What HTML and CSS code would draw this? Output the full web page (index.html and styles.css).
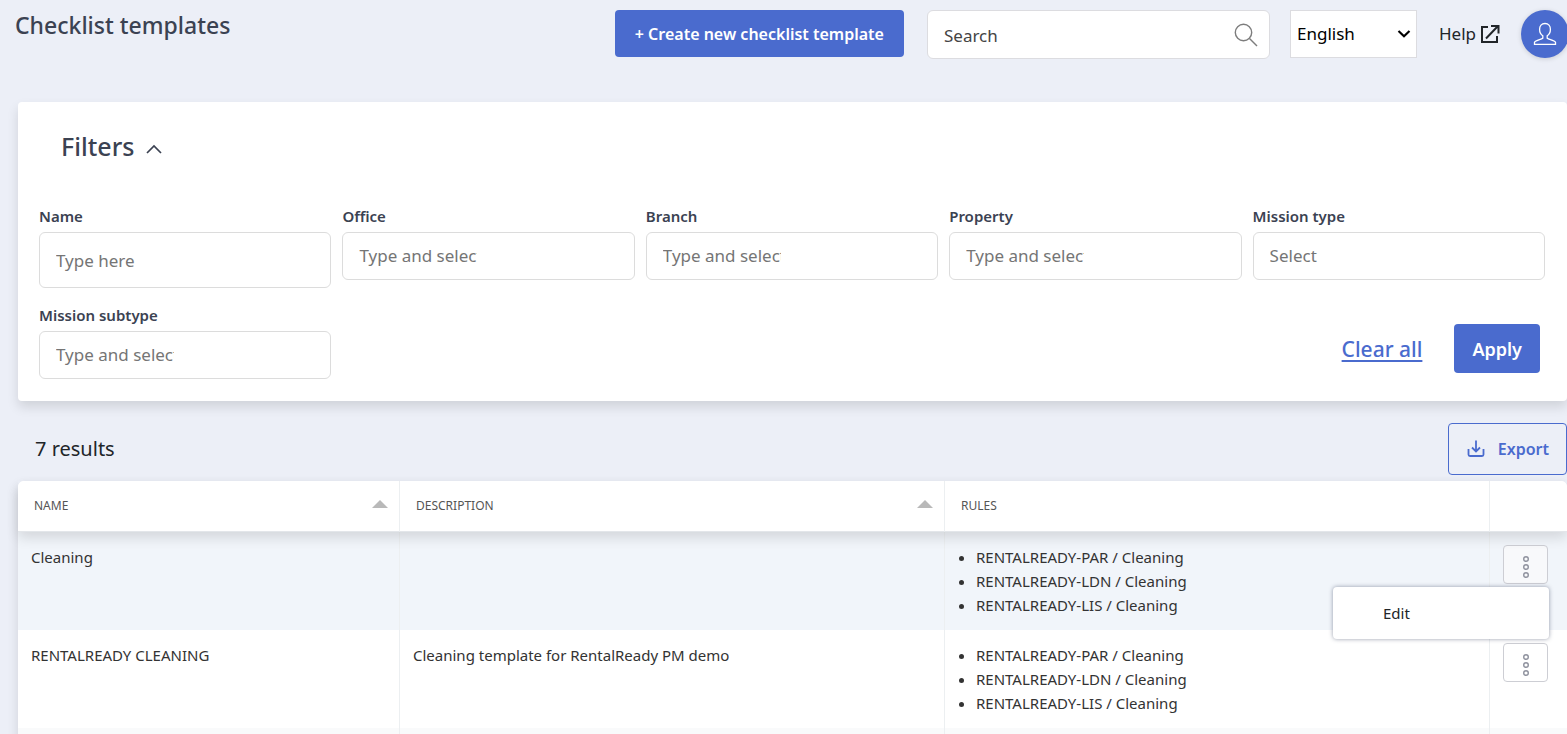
FILE: index.html
```html
<!DOCTYPE html>
<html lang="en">
<head>
    <meta charset="UTF-8">
    <meta name="viewport" content="width=device-width, initial-scale=1.0">
    <title>Checklist templates</title>
    <link rel="stylesheet" href="styles.css">
</head>
<body>
    <header class="topbar">
        <h1>Checklist templates</h1>
        <button type="button" class="btn btn-create">+ Create new checklist template</button>
        <form class="search">
            <input type="search" aria-label="Search" placeholder="Search">
            <button type="submit" aria-label="Submit search">
                <svg width="24" height="24" viewBox="0 0 24 24" fill="none" stroke="#7d7d7d" stroke-width="1.4">
                    <circle cx="9.5" cy="9.5" r="8.2"/>
                    <path d="M15.5 15.5l7.5 7.5"/>
                </svg>
            </button>
        </form>
        <div class="language">
            <select aria-label="Language">
                <option>English</option>
            </select>
            <svg width="14" height="10" viewBox="0 0 14 10" fill="none" stroke="#000" stroke-width="2.2">
                <path d="M1.5 2l5.5 5.2L12.5 2"/>
            </svg>
        </div>
        <a href="#" class="help">Help
            <svg width="20" height="20" viewBox="0 0 20 20" fill="none" stroke="#212529" stroke-width="2">
                <path d="M8 3H2v15h15v-6"/>
                <path d="M11 2h7.5v7.5M18 2L6 14.5"/>
            </svg>
        </a>
        <button type="button" class="avatar" aria-label="Account">
            <svg width="24" height="24" viewBox="0 0 24 24" fill="none" stroke="#fff" stroke-width="1.3">
                <path d="M12 1.500c-3.500 0-5.400 2.300-5.400 5.700 0 3 1.200 5.300 3.200 6.600v2.400c-2 1.300-7.300 2-8.300 4V22.300h21V20.200c-1-2-6.300-2.700-8.300-4v-2.400c2-1.300 3.200-3.600 3.200-6.600 0-3.400-1.900-5.700-5.400-5.700z"/>
            </svg>
        </button>
    </header>

    <main>
        <section class="filters">
            <h2>
                <button type="button" class="filters-toggle" aria-expanded="true">Filters
                    <svg width="16" height="10" viewBox="0 0 16 10" fill="none" stroke="#3b4252" stroke-width="1.7">
                        <path d="M1 9l7-7 7 7"/>
                    </svg>
                </button>
            </h2>
            <form class="filters-grid">
                <div class="field">
                    <label for="name">Name</label>
                    <div class="box box-tall"><input type="text" id="name" placeholder="Type here"></div>
                </div>
                <div class="field">
                    <label for="office">Office</label>
                    <div class="box"><input type="text" id="office" class="tag-input" placeholder="Type and select"></div>
                </div>
                <div class="field">
                    <label for="branch">Branch</label>
                    <div class="box"><input type="text" id="branch" class="tag-input" placeholder="Type and select"></div>
                </div>
                <div class="field">
                    <label for="property">Property</label>
                    <div class="box"><input type="text" id="property" class="tag-input" placeholder="Type and select"></div>
                </div>
                <div class="field">
                    <label for="mission-type">Mission type</label>
                    <div class="box"><input type="text" id="mission-type" class="tag-input" placeholder="Select"></div>
                </div>
                <div class="field">
                    <label for="mission-subtype">Mission subtype</label>
                    <div class="box"><input type="text" id="mission-subtype" class="tag-input" placeholder="Type and select"></div>
                </div>
                <div class="filters-actions">
                    <a href="#">Clear all</a>
                    <button type="submit" class="btn btn-apply">Apply</button>
                </div>
            </form>
        </section>

        <div class="results-bar">
            <p>7 results</p>
            <button type="button" class="btn-export">
                <svg width="18" height="18" viewBox="0 0 18 18" fill="none" stroke="#4a6bce" stroke-width="1.8">
                    <path d="M1.5 9v5.500q0 1.500 1.500 1.500h12q1.500 0 1.500-1.500V9"/>
                    <path d="M9 0.500v11M5 7.500l4 4 4-4"/>
                </svg>
                Export
            </button>
        </div>

        <table class="templates">
            <colgroup>
                <col class="col-name">
                <col class="col-text">
                <col class="col-text">
                <col class="col-actions">
            </colgroup>
            <thead>
                <tr>
                    <th><div class="th-inner">Name <span class="sort"></span></div></th>
                    <th><div class="th-inner">Description <span class="sort"></span></div></th>
                    <th><div class="th-inner">Rules</div></th>
                    <th></th>
                </tr>
            </thead>
            <tbody>
                <tr class="active">
                    <td>Cleaning</td>
                    <td></td>
                    <td>
                        <ul>
                            <li>RENTALREADY-PAR / Cleaning</li>
                            <li>RENTALREADY-LDN / Cleaning</li>
                            <li>RENTALREADY-LIS / Cleaning</li>
                        </ul>
                    </td>
                    <td>
                        <div class="actions">
                            <button type="button" class="btn-more" aria-label="More actions" aria-expanded="true">
                                <svg width="8" height="24" viewBox="0 0 8 24" fill="none" stroke="#8f929e" stroke-width="1.4">
                                    <circle cx="4" cy="4" r="2.3"/>
                                    <circle cx="4" cy="12" r="2.3"/>
                                    <circle cx="4" cy="20" r="2.3"/>
                                </svg>
                            </button>
                            <div class="menu">
                                <a href="#">Edit</a>
                            </div>
                        </div>
                    </td>
                </tr>
                <tr>
                    <td>RENTALREADY CLEANING</td>
                    <td>Cleaning template for RentalReady PM demo</td>
                    <td>
                        <ul>
                            <li>RENTALREADY-PAR / Cleaning</li>
                            <li>RENTALREADY-LDN / Cleaning</li>
                            <li>RENTALREADY-LIS / Cleaning</li>
                        </ul>
                    </td>
                    <td>
                        <div class="actions">
                            <button type="button" class="btn-more" aria-label="More actions">
                                <svg width="8" height="24" viewBox="0 0 8 24" fill="none" stroke="#8f929e" stroke-width="1.4">
                                    <circle cx="4" cy="4" r="2.3"/>
                                    <circle cx="4" cy="12" r="2.3"/>
                                    <circle cx="4" cy="20" r="2.3"/>
                                </svg>
                            </button>
                        </div>
                    </td>
                </tr>
                <tr class="striped">
                    <td></td>
                    <td></td>
                    <td></td>
                    <td></td>
                </tr>
            </tbody>
        </table>
    </main>
</body>
</html>
```
FILE: styles.css
```css
* {
    box-sizing: border-box;
}
html, body {
    height: 100%;
}
body {
    margin: 0;
    overflow: hidden;
    font-family: "Segoe UI", "Noto Sans", sans-serif;
    font-size: 15px;
    line-height: 24px;
    color: #333;
    background-color: #eceff7;
}
h1, h2, p, ul {
    margin: 0;
    padding: 0;
}
input, select, button {
    font: inherit;
    color: inherit;
}
button {
    cursor: pointer;
}

/* Top bar */
.topbar {
    display: flex;
    align-items: flex-start;
    height: 102px;
    margin-right: -2px;
    padding: 10px 0 0 15px;
}
h1 {
    margin-right: auto;
    font-size: 23px;
    line-height: 30px;
    font-weight: 500;
    color: #3b4252;
}
.btn {
    border: none;
    border-radius: 4px;
    background-color: #4a6bce;
    color: #fff;
    font-weight: 600;
}
.btn-create {
    height: 47px;
    padding: 0 20px;
    font-size: 16px;
}
.search {
    display: flex;
    align-items: center;
    width: 343px;
    height: 49px;
    margin-left: 23px;
    padding: 0 11px 0 16px;
    border: 1px solid #dcdce0;
    border-radius: 6px;
    background-color: #fff;
}
.search input {
    flex: 1;
    min-width: 0;
    padding: 2px 0 0;
    border: none;
    outline: none;
    background: none;
    font-size: 17px;
}
.search input::placeholder {
    color: #444;
}
.search button {
    display: flex;
    padding: 0;
    border: none;
    background: none;
}
.language {
    display: flex;
    align-items: center;
    height: 48px;
    width: 127px;
    margin-left: 20px;
    padding-right: 5px;
    border: 1px solid #dcdce0;
    background-color: #fff;
}
.language select {
    flex: 1;
    min-width: 0;
    height: 100%;
    padding: 0 0 0 6px;
    border: none;
    background: none;
    appearance: none;
    font-size: 17px;
    color: #000;
}
.help {
    display: flex;
    align-items: center;
    gap: 4px;
    height: 48px;
    margin-left: 22px;
    font-size: 17px;
    color: #212529;
    text-decoration: none;
}
.avatar {
    display: flex;
    align-items: center;
    justify-content: center;
    width: 48px;
    height: 48px;
    margin-left: 21px;
    padding: 0;
    border: none;
    border-radius: 50%;
    background-color: #4a6bce;
    box-shadow: 0 1px 5px rgba(0, 0, 0, 0.15);
}

/* Filters */
main {
    padding-left: 18px;
}
.filters {
    padding: 26px 22px 22px 21px;
    border-radius: 4px;
    background-color: #fff;
    box-shadow: 0 6px 12px rgba(0, 0, 0, 0.12);
}
h2 {
    margin: 0 0 42px 22px;
    font-size: 25px;
    line-height: 36px;
    font-weight: 500;
}
.filters-toggle {
    display: flex;
    align-items: center;
    gap: 12px;
    padding: 0;
    border: none;
    background: none;
    color: #3b4252;
}
.filters-toggle svg {
    margin-top: 6px;
}
.filters-grid {
    display: grid;
    grid-template-columns: repeat(5, 1fr);
    gap: 17px 11px;
}
.field label {
    display: block;
    margin-bottom: 6px;
    font-size: 15px;
    line-height: 20px;
    font-weight: 600;
    color: #3b4252;
}
.box {
    display: flex;
    align-items: center;
    height: 48px;
    padding: 0 16px;
    border: 1px solid #dcdcdc;
    border-radius: 6px;
    background-color: #fff;
}
.box-tall {
    height: 56px;
    padding-top: 2px;
}
.box input {
    width: 100%;
    padding: 0;
    border: none;
    outline: none;
    background: none;
    font-size: 17px;
}
.box input::placeholder {
    color: #757575;
}
.box .tag-input {
    width: 118px;
}
.filters-actions {
    grid-column: span 4;
    display: flex;
    align-items: center;
    justify-content: flex-end;
    align-self: end;
    gap: 32px;
    padding: 0 5px 6px 0;
}
.filters-actions a {
    font-size: 21px;
    font-weight: 500;
    color: #4a6bce;
    text-decoration-thickness: 2px;
    text-underline-offset: 3px;
}
.btn-apply {
    height: 49px;
    padding: 0 18px;
    font-size: 18px;
}

/* Results */
.results-bar {
    display: flex;
    align-items: center;
    justify-content: space-between;
    margin: 22px 0 6px;
    padding-left: 17px;
}
.results-bar p {
    font-size: 20px;
    color: #212529;
}
.btn-export {
    display: flex;
    align-items: center;
    gap: 13px;
    height: 52px;
    padding: 0 17px 0 18px;
    border: 1px solid #4a6bce;
    border-radius: 4px;
    background: none;
    font-size: 16px;
    font-weight: 600;
    color: #4a6bce;
}

/* Table */
.templates {
    width: 100%;
    table-layout: fixed;
    border-spacing: 0;
    border-radius: 6px 6px 0 0;
    background-color: #fff;
    box-shadow: 0 6px 12px rgba(0, 0, 0, 0.12);
}
.col-name {
    width: 382px;
}
.col-actions {
    width: 77px;
}
thead {
    position: relative;
    z-index: 1;
    box-shadow: 0 6px 12px rgba(0, 0, 0, 0.12);
}
th, td {
    border-right: 1px solid #eceff1;
    text-align: left;
    vertical-align: top;
}
th:last-child, td:last-child {
    border-right: none;
}
th {
    height: 51px;
    padding: 0 11px 0 16px;
    border-bottom: 1px solid #e3e6ea;
    vertical-align: middle;
    background-color: #fff;
    font-size: 12px;
    font-weight: 400;
    text-transform: uppercase;
    color: #555;
}
th:first-child {
    border-top-left-radius: 6px;
}
th:last-child {
    border-top-right-radius: 6px;
}
.th-inner {
    display: flex;
    align-items: center;
    justify-content: space-between;
}
.sort {
    margin-bottom: 4px;
    border: 8px solid transparent;
    border-top: none;
    border-bottom-color: #b9b9b9;
}
td {
    padding: 13px;
}
.active td {
    background-color: #f1f5fa;
}
.striped td {
    background-color: #f9fafb;
}
td ul {
    padding-left: 18px;
}
.actions {
    position: relative;
    width: 45px;
}
.btn-more {
    display: flex;
    align-items: center;
    justify-content: center;
    width: 45px;
    height: 39px;
    padding: 4px 0 0;
    border: 1px solid #cdced4;
    border-radius: 4px;
    background-color: #fff;
}
.active .btn-more {
    background-color: #f8f9fb;
}
.menu {
    position: absolute;
    top: 42px;
    right: -1px;
    z-index: 2;
    width: 216px;
    border-radius: 4px;
    background-color: #fff;
    box-shadow: 0 0 4px rgba(50, 60, 90, 0.5);
}
.menu a {
    display: block;
    padding: 14px 50px;
    color: #212529;
    text-decoration: none;
}
```
